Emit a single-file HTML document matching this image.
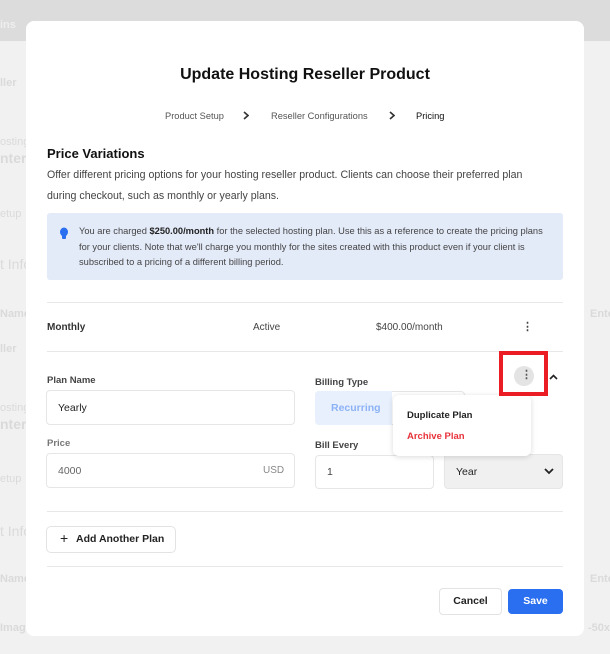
<!DOCTYPE html>
<html><head><style>
*{box-sizing:border-box;margin:0;padding:0}
body{width:610px;height:654px;background:#f1f1f1;font-family:"Liberation Sans",sans-serif;position:relative;overflow:hidden;color:#222}
.top{position:absolute;left:0;top:0;width:610px;height:41px;background:#dcdcdc}
.bg{position:absolute;color:#dadada;font-size:11px;font-weight:bold}
.m{position:absolute;left:26px;top:21px;width:558px;height:615px;background:#fff;border-radius:8px}
.a{position:absolute;white-space:nowrap}
.hr{position:absolute;left:47px;width:516px;height:1px;background:#e8e8e8}
.lbl{font-size:9.5px;font-weight:bold;color:#444}
.inp{position:absolute;border:1px solid #e6e6e6;border-radius:4px;background:#fff}
</style></head><body>
<div class="top"></div>
<div class="bg" style="left:0;top:19px;color:#eee">ins</div>
<div class="bg" style="left:0;top:77px">ller</div>
<div class="bg" style="left:0;top:136px;font-weight:normal">osting</div>
<div class="bg" style="left:0;top:150px;font-size:14px">nterp</div>
<div class="bg" style="left:0;top:208px;font-weight:normal">etup</div>
<div class="bg" style="left:0;top:256px;font-size:14px;font-weight:normal">t Info</div>
<div class="bg" style="left:0;top:308px">Name</div>
<div class="bg" style="left:0;top:343px">ller</div>
<div class="bg" style="left:0;top:402px;font-weight:normal">osting</div>
<div class="bg" style="left:0;top:416px;font-size:14px">nterp</div>
<div class="bg" style="left:0;top:473px;font-weight:normal">etup</div>
<div class="bg" style="left:0;top:523px;font-size:14px;font-weight:normal">t Info</div>
<div class="bg" style="left:0;top:573px">Name</div>
<div class="bg" style="left:0;top:622px">Image</div>
<div class="bg" style="left:590px;top:308px">Ente</div>
<div class="bg" style="left:590px;top:573px">Ente</div>
<div class="bg" style="left:588px;top:622px">-50x5</div>
<div class="m"></div>
<div class="a" style="left:0;width:610px;text-align:center;top:66px;font-size:16px;font-weight:bold;color:#111">Update Hosting Reseller Product</div>
<div class="a" style="left:165px;top:111px;font-size:9.3px;color:#555">Product Setup</div>
<svg class="a" style="left:243px;top:111px" width="6" height="9"><path d="M1 1L5 4.5L1 8" stroke="#333" stroke-width="1.6" fill="none"/></svg>
<div class="a" style="left:271px;top:111px;font-size:9.3px;color:#555">Reseller Configurations</div>
<svg class="a" style="left:389px;top:111px" width="6" height="9"><path d="M1 1L5 4.5L1 8" stroke="#333" stroke-width="1.6" fill="none"/></svg>
<div class="a" style="left:416px;top:111px;font-size:9.3px;color:#111">Pricing</div>
<div class="a" style="left:47px;top:146px;font-size:13px;font-weight:bold;color:#111">Price Variations</div>
<div class="a" style="left:47px;top:165px;font-size:10.6px;line-height:21px;color:#444">Offer different pricing options for your hosting reseller product. Clients can choose their preferred plan<br>during checkout, such as monthly or yearly plans.</div>
<div class="a" style="left:47px;top:213px;width:516px;height:67px;background:#e3eaf8;border-radius:3px"></div>
<svg class="a" style="left:59px;top:227px" width="10" height="14"><ellipse cx="5" cy="5" rx="4" ry="4.5" fill="#2a6ff0"/><rect x="3" y="8" width="4" height="4" rx="1" fill="#2a6ff0"/></svg>
<div class="a" style="left:79px;top:224px;font-size:9.3px;line-height:15.7px;color:#444">You are charged <b style="color:#222">$250.00/month</b> for the selected hosting plan. Use this as a reference to create the pricing plans<br>for your clients. Note that we'll charge you monthly for the sites created with this product even if your client is<br>subscribed to a pricing of a different billing period.</div>
<div class="hr" style="top:302px"></div>
<div class="a" style="left:47px;top:322px;font-size:10px;font-weight:bold;color:#333">Monthly</div>
<div class="a" style="left:253px;top:322px;font-size:10px;color:#444">Active</div>
<div class="a" style="left:376px;top:322px;font-size:10px;color:#444">$400.00/month</div>
<div class="a" style="left:522px;top:320px;font-size:11px;color:#444;font-weight:bold">⋮</div>
<div class="hr" style="top:351px"></div>
<div class="a lbl" style="left:47px;top:375px">Plan Name</div>
<div class="inp" style="left:46px;top:390px;width:249px;height:35px"></div>
<div class="a" style="left:58px;top:402px;font-size:10.5px;color:#222">Yearly</div>
<div class="a lbl" style="left:47px;top:438px;color:#777">Price</div>
<div class="inp" style="left:46px;top:453px;width:249px;height:35px"></div>
<div class="a" style="left:58px;top:465px;font-size:10.5px;color:#666">4000</div>
<div class="a" style="left:263px;top:465px;font-size:10px;color:#888">USD</div>
<div class="a lbl" style="left:315px;top:377px">Billing Type</div>
<div class="inp" style="left:315px;top:391px;width:150px;height:34px"></div>
<div class="a" style="left:315px;top:391px;width:77px;height:34px;background:#e8f0fe;border-radius:4px 0 0 4px"></div>
<div class="a" style="left:331px;top:402px;font-size:10.5px;font-weight:bold;color:#8cb2f6">Recurring</div>
<div class="a lbl" style="left:315px;top:440px">Bill Every</div>
<div class="inp" style="left:315px;top:455px;width:119px;height:34px"></div>
<div class="a" style="left:327px;top:466px;font-size:10.5px;color:#444">1</div>
<div class="a" style="left:444px;top:454px;width:119px;height:35px;background:#f0f0f0;border:1px solid #e6e6e6;border-radius:4px"></div>
<div class="a" style="left:456px;top:466px;font-size:10.5px;color:#222">Year</div>
<svg class="a" style="left:544px;top:468px" width="10" height="7"><path d="M1 1L5 5L9 1" stroke="#222" stroke-width="1.8" fill="none"/></svg>
<div class="a" style="left:393px;top:395px;width:138px;height:61px;background:#fff;border-radius:6px;box-shadow:0 1px 6px rgba(0,0,0,.15)"></div>
<div class="a" style="left:407px;top:410px;font-size:9.5px;font-weight:bold;color:#222">Duplicate Plan</div>
<div class="a" style="left:407px;top:431px;font-size:9.5px;font-weight:bold;color:#e8323a">Archive Plan</div>
<div class="a" style="left:499px;top:351px;width:49px;height:45px;border:4px solid #ec1c24"></div>
<div class="a" style="left:514px;top:366px;width:20px;height:20px;border-radius:50%;background:#e4e4e4"></div>
<div class="a" style="left:521px;top:368px;font-size:11px;color:#555;font-weight:bold">⋮</div>
<svg class="a" style="left:549px;top:374px" width="9" height="6"><path d="M1 5L4.5 1.5L8 5" stroke="#222" stroke-width="1.6" fill="none"/></svg>
<div class="hr" style="top:511px"></div>
<div class="a" style="left:46px;top:526px;width:130px;height:27px;border:1px solid #e3e3e3;border-radius:5px"></div>
<div class="a" style="left:60px;top:530px;font-size:14px;color:#222">+</div>
<div class="a" style="left:76px;top:533px;font-size:10.5px;font-weight:bold;color:#222">Add Another Plan</div>
<div class="hr" style="top:566px"></div>
<div class="a" style="left:439px;top:588px;width:63px;height:27px;border:1px solid #e3e3e3;border-radius:4px;text-align:center;line-height:25px;font-size:10.5px;font-weight:bold;color:#222">Cancel</div>
<div class="a" style="left:508px;top:589px;width:55px;height:25px;background:#2a6ff0;border-radius:4px;text-align:center;line-height:25px;font-size:10.5px;font-weight:bold;color:#fff">Save</div>
</body></html>
